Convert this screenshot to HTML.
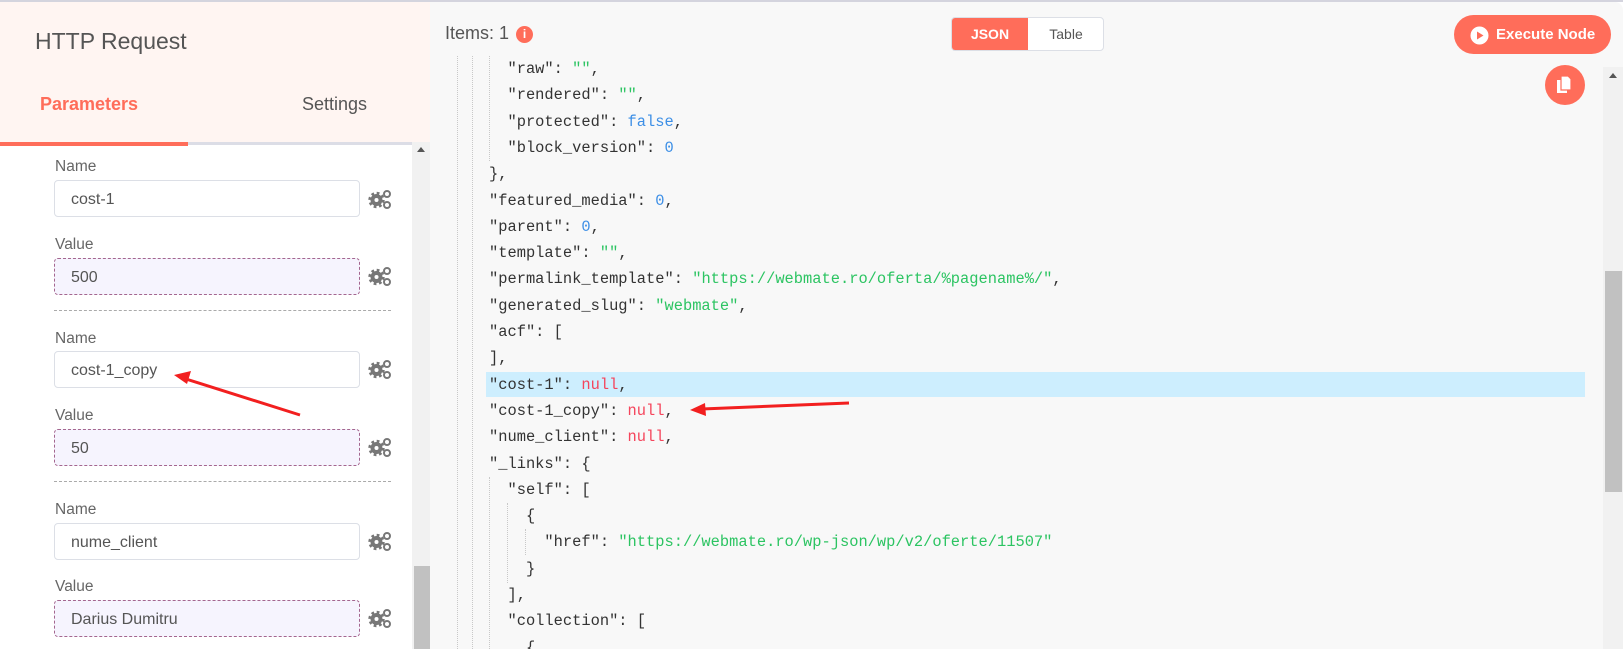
<!DOCTYPE html>
<html><head><meta charset="utf-8">
<style>
*{margin:0;padding:0;box-sizing:border-box}
body{width:1623px;height:649px;overflow:hidden;background:#fff;font-family:"Liberation Sans",sans-serif;position:relative}
.topline{position:absolute;left:0;top:0;width:1623px;height:2px;background:#d4d4de}
.left{position:absolute;left:0;top:2px;width:430px;height:647px;background:#fff}
.hdr{position:absolute;left:0;top:0;width:430px;height:140px;background:#fff5f2}
.title{position:absolute;left:35px;top:26px;font-size:23px;color:#555}
.tab{position:absolute;top:92px;font-size:18px}
.ul{position:absolute;top:140px;height:4px}
.lbl{position:absolute;left:55px;font-size:15.5px;color:#666}
.inp{position:absolute;left:54px;width:306px;height:37px;border:1px solid #dcdfe6;border-radius:4px;background:#fff;font-size:16px;color:#555;padding-left:16px;line-height:38px}
.inp.v{background:#f6f4fe;border:1px dashed #a4668f}
.gear{position:absolute;left:368px}
.sep{position:absolute;left:54px;width:337px;border-top:1px dashed #aaa}
.lsb{position:absolute;left:412px;top:142px;width:18px;height:507px;background:#f1f1f1}
.right{position:absolute;left:430px;top:2px;width:1193px;height:647px;background:#f8f8f8;border-top-right-radius:8px}
.code{position:absolute;left:0;top:54px;width:1170px;height:593px;overflow:hidden;font-family:"Liberation Mono",monospace;font-size:15.4px;color:#333}
.ln{position:absolute;height:26.3px;line-height:26.3px;white-space:pre}
.s{color:#2cc462}.n{color:#3d8fe6}.nl{color:#f5455c}
.g{position:absolute;width:0;border-left:1px dotted #c8c8c8}
</style></head><body>
<div class="topline"></div>
<div class="left">
 <div class="hdr">
  <div class="title">HTTP Request</div>
  <div class="tab" style="left:40px;color:#ff6d5a;font-weight:bold">Parameters</div>
  <div class="tab" style="left:302px;color:#555">Settings</div>
 </div>
 <div class="ul" style="left:0;width:188px;background:#ff6d5a"></div>
 <div class="ul" style="left:188px;width:242px;background:#dcdde6;height:3px"></div>
</div>
<div class="lsb"><div style="position:absolute;left:5px;top:5px;border:4px solid transparent;border-bottom:5px solid #555;border-top:0"></div><div style="position:absolute;left:2px;top:424px;width:16px;height:83px;background:#c1c1c1"></div></div>

<div class="lbl" style="top:158px">Name</div>
<div class="inp" style="top:180px">cost-1</div>
<div class="lbl" style="top:236px">Value</div>
<div class="inp v" style="top:258px">500</div>
<div class="sep" style="top:310px"></div>
<div class="lbl" style="top:330px">Name</div>
<div class="inp" style="top:351px">cost-1_copy</div>
<div class="lbl" style="top:407px">Value</div>
<div class="inp v" style="top:429px">50</div>
<div class="sep" style="top:481px"></div>
<div class="lbl" style="top:501px">Name</div>
<div class="inp" style="top:523px">nume_client</div>
<div class="lbl" style="top:578px">Value</div>
<div class="inp v" style="top:600px">Darius Dumitru</div>

<svg width="0" height="0" style="position:absolute"><defs><g id="gr"><circle cx="8.5" cy="11" r="6.5" fill="none" stroke="#777" stroke-width="3.4" stroke-dasharray="2.6 2.5"/><circle cx="8.5" cy="11" r="6" fill="#777"/><circle cx="8.5" cy="11" r="2" fill="#fff"/><circle cx="19" cy="5" r="3" fill="none" stroke="#777" stroke-width="2"/><circle cx="19" cy="16" r="3" fill="none" stroke="#777" stroke-width="2"/></g></defs></svg>
<svg class="gear" style="top:189px" width="24" height="22"><use href="#gr"/></svg>
<svg class="gear" style="top:266px" width="24" height="22"><use href="#gr"/></svg>
<svg class="gear" style="top:359px" width="24" height="22"><use href="#gr"/></svg>
<svg class="gear" style="top:437px" width="24" height="22"><use href="#gr"/></svg>
<svg class="gear" style="top:531px" width="24" height="22"><use href="#gr"/></svg>
<svg class="gear" style="top:608px" width="24" height="22"><use href="#gr"/></svg>

<div class="right">
 <div style="position:absolute;left:15px;top:21px;font-size:18px;color:#555">Items: 1</div>
 <div style="position:absolute;left:86px;top:24px;width:17px;height:17px;border-radius:50%;background:#ff6d5a;color:#fff;font-size:12px;font-weight:bold;text-align:center;line-height:17px">i</div>
 <div style="position:absolute;left:521px;top:15px;width:153px;height:34px;border:1px solid #dcdfe6;border-radius:4px;background:#fff;overflow:hidden">
  <div style="position:absolute;left:0;top:0;width:76px;height:34px;background:#ff6d5a;color:#fff;font-weight:bold;font-size:14px;text-align:center;line-height:32px">JSON</div>
  <div style="position:absolute;left:76px;top:0;width:76px;height:34px;color:#555;font-size:14px;text-align:center;line-height:32px">Table</div>
 </div>
 <div style="position:absolute;left:1024px;top:13px;width:157px;height:39px;border-radius:20px;background:#ff6d5a;color:#fff;font-weight:bold;font-size:15px;line-height:39px;padding-left:42px">Execute Node</div>
 <svg style="position:absolute;left:1040px;top:24px" width="19" height="19"><circle cx="9.5" cy="9.5" r="9" fill="#fff"/><path d="M7 5.5 L13.5 9.5 L7 13.5Z" fill="#ff6d5a"/></svg>
 <div style="position:absolute;left:1115px;top:63px;width:40px;height:40px;border-radius:50%;background:#ff6d5a"></div>
 <svg style="position:absolute;left:1126px;top:73px" width="18" height="20"><rect x="1" y="5" width="10" height="13" fill="#fff"/><path d="M5 1 H12 L15 4 V15 H5Z" fill="#fff" stroke="#ff6d5a" stroke-width="1.2"/></svg>
 <div style="position:absolute;left:1173px;top:65px;width:20px;height:582px;background:#f1f1f1"><div style="position:absolute;left:6px;top:6px;border:4px solid transparent;border-bottom:5px solid #555;border-top:0"></div><div style="position:absolute;left:2px;top:204px;width:17px;height:221px;background:#c1c1c1"></div></div>

 <div class="code">
  <div class="g" style="left:27px;top:0;height:593px"></div>
  <div class="g" style="left:42px;top:0;height:593px"></div>
  <div class="g" style="left:59px;top:0;height:105px"></div>
  <div class="g" style="left:59px;top:421px;height:172px"></div>
  <div class="g" style="left:77px;top:447px;height:80px"></div>
  <div class="g" style="left:95px;top:473px;height:26px"></div>
  <div style="position:absolute;left:56px;top:316px;width:1099px;height:25px;background:#cdeefe"></div>
  <div class="ln" style="left:59px;top:0">  "raw": <span class="s">""</span>,</div>
  <div class="ln" style="left:59px;top:26.3px">  "rendered": <span class="s">""</span>,</div>
  <div class="ln" style="left:59px;top:52.6px">  "protected": <span class="n">false</span>,</div>
  <div class="ln" style="left:59px;top:78.9px">  "block_version": <span class="n">0</span></div>
  <div class="ln" style="left:59px;top:105.2px">},</div>
  <div class="ln" style="left:59px;top:131.5px">"featured_media": <span class="n">0</span>,</div>
  <div class="ln" style="left:59px;top:157.8px">"parent": <span class="n">0</span>,</div>
  <div class="ln" style="left:59px;top:184.1px">"template": <span class="s">""</span>,</div>
  <div class="ln" style="left:59px;top:210.4px">"permalink_template": <span class="s">"https://webmate.ro/oferta/%pagename%/"</span>,</div>
  <div class="ln" style="left:59px;top:236.7px">"generated_slug": <span class="s">"webmate"</span>,</div>
  <div class="ln" style="left:59px;top:263px">"acf": [</div>
  <div class="ln" style="left:59px;top:289.3px">],</div>
  <div class="ln" style="left:59px;top:315.6px">"cost-1": <span class="nl">null</span>,</div>
  <div class="ln" style="left:59px;top:341.9px">"cost-1_copy": <span class="nl">null</span>,</div>
  <div class="ln" style="left:59px;top:368.2px">"nume_client": <span class="nl">null</span>,</div>
  <div class="ln" style="left:59px;top:394.5px">"_links": {</div>
  <div class="ln" style="left:59px;top:420.8px">  "self": [</div>
  <div class="ln" style="left:59px;top:447.1px">    {</div>
  <div class="ln" style="left:59px;top:473.4px">      "href": <span class="s">"https://webmate.ro/wp-json/wp/v2/oferte/11507"</span></div>
  <div class="ln" style="left:59px;top:499.7px">    }</div>
  <div class="ln" style="left:59px;top:526px">  ],</div>
  <div class="ln" style="left:59px;top:552.3px">  "collection": [</div>
  <div class="ln" style="left:59px;top:578.6px">    {</div>
 </div>
</div>

<svg style="position:absolute;left:0;top:0" width="1623" height="649">
 <line x1="300" y1="415" x2="186" y2="379" stroke="#f21f1f" stroke-width="3"/>
 <path d="M174 375 L191 371 L187 384Z" fill="#f21f1f"/>
 <line x1="849" y1="403" x2="702" y2="409" stroke="#f21f1f" stroke-width="3"/>
 <path d="M690 410 L705 403 L706 416Z" fill="#f21f1f"/>
</svg>
</body></html>
